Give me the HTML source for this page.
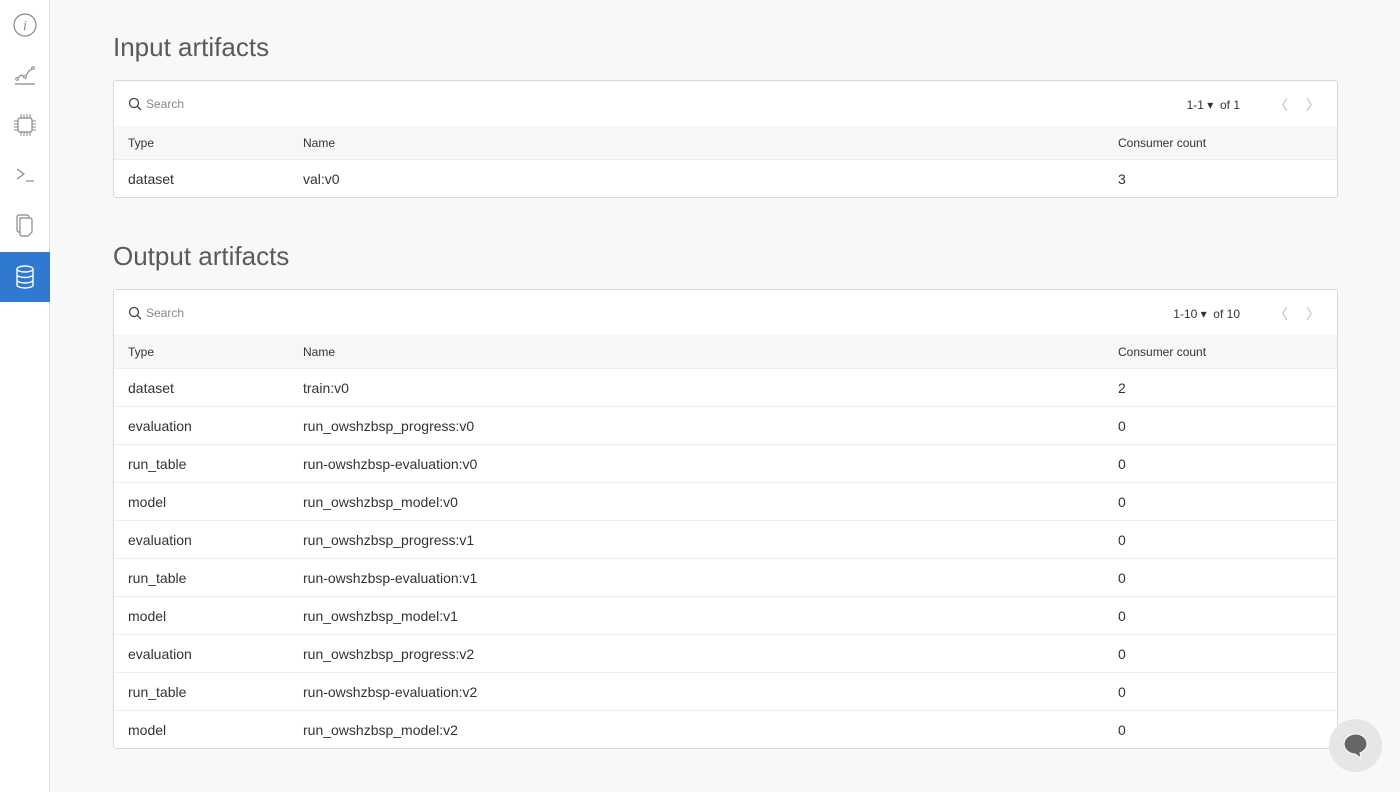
<!DOCTYPE html>
<html><head><style>
*{box-sizing:border-box;margin:0;padding:0}
body{width:1400px;height:792px;background:#f8f8f8;font-family:"Liberation Sans",sans-serif;color:#333;position:relative;overflow:hidden}
.side{position:absolute;left:0;top:0;width:50px;height:792px;background:#fff;border-right:1px solid #ddd}
.ic{position:absolute;left:0;width:50px;height:50px;display:flex;align-items:center;justify-content:center}
.ic.act{background:#2f7ad0}
h2{position:absolute;left:113px;font-weight:300;font-size:26px;color:#5a5a5a}
.card{position:absolute;left:113px;width:1225px;background:#fff;border:1px solid #d8d8d8;border-radius:3px}
.srch{height:45px;position:relative;font-size:12px;color:#888}
.srch .s{position:absolute;left:14px;top:16px;display:flex;align-items:center;gap:4px}
.pg{position:absolute;right:97px;top:17px;color:#333;font-size:12px}
.arr{position:absolute;top:14px;color:#bbb;font-size:14px}
.row{height:38px;display:flex;align-items:center;border-top:1px solid #eee;font-size:14px;position:relative}
.hd{height:33px;background:#f7f7f7;font-size:12px;border-top:none}
.c1{position:absolute;left:14px}.c2{position:absolute;left:189px}.c3{position:absolute;left:1004px}
.chat{position:absolute;left:1329px;top:719px;width:53px;height:53px;border-radius:50%;background:#e6e6e6;display:flex;align-items:center;justify-content:center}
</style></head><body>
<div class="side">
<div class="ic" style="top:0"><svg width="26" height="26"><circle cx="13" cy="13" r="11" fill="none" stroke="#888" stroke-width="1.2"/><text x="13" y="18" font-size="14" font-style="italic" font-family="Liberation Serif" fill="#888" text-anchor="middle">i</text></svg></div>
<div class="ic" style="top:50px"><svg width="24" height="24"><polyline points="4,16 8,12 12,14 16,8 20,5" fill="none" stroke="#888" stroke-width="1.2"/><circle cx="4" cy="16" r="1.3" fill="#fff" stroke="#888"/><circle cx="12" cy="14" r="1.3" fill="#fff" stroke="#888"/><circle cx="20" cy="5" r="1.3" fill="#fff" stroke="#888"/><line x1="2" y1="21" x2="22" y2="21" stroke="#888" stroke-width="1.2"/></svg></div>
<div class="ic" style="top:100px"><svg width="26" height="26"><rect x="6" y="6" width="14" height="14" rx="2" fill="none" stroke="#888" stroke-width="1.2"/><g stroke="#888" stroke-width="1"><path d="M9 2v4M12 2v4M15 2v4M18 2v4M9 20v4M12 20v4M15 20v4M18 20v4M2 9h4M2 12h4M2 15h4M2 18h4M20 9h4M20 12h4M20 15h4M20 18h4"/></g></svg></div>
<div class="ic" style="top:150px"><svg width="24" height="24"><polyline points="4,6 11,11 4,16" fill="none" stroke="#888" stroke-width="1.2"/><line x1="13" y1="18" x2="21" y2="18" stroke="#888" stroke-width="1.2"/></svg></div>
<div class="ic" style="top:200px"><svg width="24" height="26"><rect x="4" y="3" width="12" height="17" rx="2" fill="none" stroke="#888" stroke-width="1.2"/><path d="M7 6h10a2 2 0 0 1 2 2v12l-4 4h-6a2 2 0 0 1-2-2z" fill="#fff" stroke="#888" stroke-width="1.2"/></svg></div>
<div class="ic act" style="top:252px"><svg width="22" height="26" fill="none" stroke="#fff" stroke-width="1.4"><ellipse cx="11" cy="5" rx="8" ry="3"/><path d="M3 5v16c0 1.7 3.6 3 8 3s8-1.3 8-3V5M3 10.5c0 1.7 3.6 3 8 3s8-1.3 8-3M3 16c0 1.7 3.6 3 8 3s8-1.3 8-3"/></svg></div>
</div>
<h2 style="top:32px">Input artifacts</h2>
<div class="card" style="top:80px">
<div class="srch"><div class="s"><svg width="14" height="14"><circle cx="6" cy="6" r="4.5" fill="none" stroke="#444" stroke-width="1.3"/><line x1="9.3" y1="9.3" x2="13" y2="13" stroke="#444" stroke-width="1.3"/></svg>Search</div><div class="pg">1-1 ▾ &nbsp;of 1</div><div class="arr" style="left:1160px">〈</div><div class="arr" style="left:1192px">〉</div></div>
<div class="row hd"><span class="c1">Type</span><span class="c2">Name</span><span class="c3">Consumer count</span></div>
<div class="row"><span class="c1">dataset</span><span class="c2">val:v0</span><span class="c3">3</span></div>
</div>
<h2 style="top:241px">Output artifacts</h2>
<div class="card" style="top:289px">
<div class="srch"><div class="s"><svg width="14" height="14"><circle cx="6" cy="6" r="4.5" fill="none" stroke="#444" stroke-width="1.3"/><line x1="9.3" y1="9.3" x2="13" y2="13" stroke="#444" stroke-width="1.3"/></svg>Search</div><div class="pg">1-10 ▾ &nbsp;of 10</div><div class="arr" style="left:1160px">〈</div><div class="arr" style="left:1192px">〉</div></div>
<div class="row hd"><span class="c1">Type</span><span class="c2">Name</span><span class="c3">Consumer count</span></div>
<div class="row"><span class="c1">dataset</span><span class="c2">train:v0</span><span class="c3">2</span></div>
<div class="row"><span class="c1">evaluation</span><span class="c2">run_owshzbsp_progress:v0</span><span class="c3">0</span></div>
<div class="row"><span class="c1">run_table</span><span class="c2">run-owshzbsp-evaluation:v0</span><span class="c3">0</span></div>
<div class="row"><span class="c1">model</span><span class="c2">run_owshzbsp_model:v0</span><span class="c3">0</span></div>
<div class="row"><span class="c1">evaluation</span><span class="c2">run_owshzbsp_progress:v1</span><span class="c3">0</span></div>
<div class="row"><span class="c1">run_table</span><span class="c2">run-owshzbsp-evaluation:v1</span><span class="c3">0</span></div>
<div class="row"><span class="c1">model</span><span class="c2">run_owshzbsp_model:v1</span><span class="c3">0</span></div>
<div class="row"><span class="c1">evaluation</span><span class="c2">run_owshzbsp_progress:v2</span><span class="c3">0</span></div>
<div class="row"><span class="c1">run_table</span><span class="c2">run-owshzbsp-evaluation:v2</span><span class="c3">0</span></div>
<div class="row"><span class="c1">model</span><span class="c2">run_owshzbsp_model:v2</span><span class="c3">0</span></div>
</div>
<div class="chat"><svg width="30" height="30"><path d="M15 3C8 3 3 7.5 3 13c0 5 4.5 9.5 11 10l6 4-1-5c4-1.5 7-5 7-9 0-5.5-5-10-11-10z" fill="#666" stroke="#fff" stroke-width="1"/></svg></div>
</body></html>
